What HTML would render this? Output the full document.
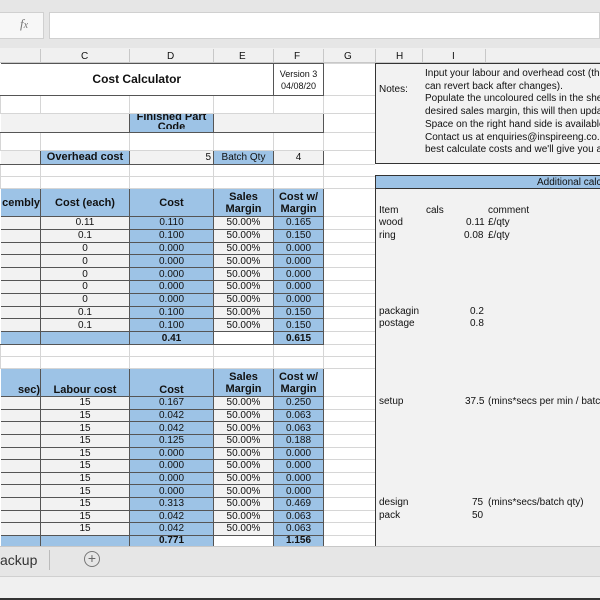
<!DOCTYPE html>
<html><head><meta charset="utf-8"><style>
*{margin:0;padding:0;box-sizing:border-box}
body{width:600px;height:600px;overflow:hidden;background:#fff;font-family:"Liberation Sans",Arial,sans-serif;font-size:10px;color:#111;position:relative}
.a{position:absolute}
table{position:absolute;left:0;top:63px;border-collapse:collapse;table-layout:fixed}
td{border:1px solid #d6d6d6;padding:0 2px;white-space:nowrap;overflow:hidden;text-align:center;font-size:10px;line-height:9px}
td.g{background:#f2f2f2;border-color:#555}
td.u{background:#9dc3e6;border-color:#555}
td.w{border-color:#555}
td.h{font-weight:bold;font-size:11px;line-height:12px}
td.r{text-align:right}
.rt{position:absolute;font-size:10px;white-space:nowrap}
</style></head><body>
<div class="a" style="left:0;top:0;width:600px;height:48px;background:#e6e6e6"></div>
<div class="a" style="left:0;top:12px;width:44px;height:27px;background:#f7f7f7;border:1px solid #d0d0d0;border-left:none"></div>
<div class="a" style="left:20px;top:16px;font-family:'Liberation Serif',serif;font-style:italic;font-size:13px;color:#777">f<span style="font-size:10px">x</span></div>
<div class="a" style="left:49px;top:12px;width:551px;height:27px;background:#fff;border:1px solid #d0d0d0"></div>
<div class="a" style="left:0;top:48px;width:600px;height:15px;background:#f0f0f0;border-bottom:1px solid #c8c8c8"></div>
<div class="a" style="left:40px;top:49px;width:1px;height:14px;background:#c8c8c8"></div>
<div class="a" style="left:129px;top:49px;width:1px;height:14px;background:#c8c8c8"></div>
<div class="a" style="left:213px;top:49px;width:1px;height:14px;background:#c8c8c8"></div>
<div class="a" style="left:273px;top:49px;width:1px;height:14px;background:#c8c8c8"></div>
<div class="a" style="left:323px;top:49px;width:1px;height:14px;background:#c8c8c8"></div>
<div class="a" style="left:375px;top:49px;width:1px;height:14px;background:#c8c8c8"></div>
<div class="a" style="left:422px;top:49px;width:1px;height:14px;background:#c8c8c8"></div>
<div class="a" style="left:485px;top:49px;width:1px;height:14px;background:#c8c8c8"></div>
<div class="rt" style="left:81px;top:51px">C</div>
<div class="rt" style="left:167px;top:51px">D</div>
<div class="rt" style="left:239px;top:51px">E</div>
<div class="rt" style="left:294px;top:51px">F</div>
<div class="rt" style="left:344px;top:51px">G</div>
<div class="rt" style="left:396px;top:51px">H</div>
<div class="rt" style="left:452px;top:51px">I</div>

<table>
<colgroup><col style="width:40px"><col style="width:89px"><col style="width:84px"><col style="width:60px"><col style="width:50px"><col style="width:52px"></colgroup>
<tr style="height:32px"><td class="w" colspan="4" style="font-weight:bold;font-size:12px;border-color:#555;border-left:none">Cost Calculator</td><td class="w" style="font-size:9px;line-height:12px;padding:0">Version 3<br>04/08/20</td><td></td></tr>
<tr style="height:18px"><td></td><td></td><td></td><td></td><td></td><td></td></tr>
<tr style="height:19px"><td class="g" colspan="2" style="border-left:none"></td><td class="u h" style="line-height:10px;vertical-align:top;height:19px"><div style="height:17px;overflow:hidden;margin-top:-2px">Finished Part<br>Code</div></td><td class="g" colspan="2"></td><td></td></tr>
<tr style="height:18px"><td></td><td></td><td></td><td></td><td></td><td></td></tr>
<tr style="height:14px"><td class="g" style="border-left:none"></td><td class="u h" style="line-height:11px">Overhead cost</td><td class="g r">5</td><td class="u">Batch Qty</td><td class="g">4</td><td></td></tr>
<tr style="height:12px"><td></td><td></td><td></td><td></td><td></td><td></td></tr>
<tr style="height:12px"><td></td><td></td><td></td><td></td><td></td><td></td></tr>
<tr style="height:28px"><td class="u h r" style="border-left:none;padding:0">cembly</td><td class="u h">Cost (each)</td><td class="u h">Cost</td><td class="u h">Sales<br>Margin</td><td class="u h">Cost w/<br>Margin</td><td></td></tr>
<tr style="height:12.8px"><td class="g" style="border-left:none"></td><td class="g">0.11</td><td class="u">0.110</td><td class="g">50.00%</td><td class="u">0.165</td><td></td></tr>
<tr style="height:12.8px"><td class="g" style="border-left:none"></td><td class="g">0.1</td><td class="u">0.100</td><td class="g">50.00%</td><td class="u">0.150</td><td></td></tr>
<tr style="height:12.8px"><td class="g" style="border-left:none"></td><td class="g">0</td><td class="u">0.000</td><td class="g">50.00%</td><td class="u">0.000</td><td></td></tr>
<tr style="height:12.8px"><td class="g" style="border-left:none"></td><td class="g">0</td><td class="u">0.000</td><td class="g">50.00%</td><td class="u">0.000</td><td></td></tr>
<tr style="height:12.8px"><td class="g" style="border-left:none"></td><td class="g">0</td><td class="u">0.000</td><td class="g">50.00%</td><td class="u">0.000</td><td></td></tr>
<tr style="height:12.8px"><td class="g" style="border-left:none"></td><td class="g">0</td><td class="u">0.000</td><td class="g">50.00%</td><td class="u">0.000</td><td></td></tr>
<tr style="height:12.8px"><td class="g" style="border-left:none"></td><td class="g">0</td><td class="u">0.000</td><td class="g">50.00%</td><td class="u">0.000</td><td></td></tr>
<tr style="height:12.8px"><td class="g" style="border-left:none"></td><td class="g">0.1</td><td class="u">0.100</td><td class="g">50.00%</td><td class="u">0.150</td><td></td></tr>
<tr style="height:12.8px"><td class="g" style="border-left:none"></td><td class="g">0.1</td><td class="u">0.100</td><td class="g">50.00%</td><td class="u">0.150</td><td></td></tr>
<tr style="height:13px"><td class="u" style="border-left:none"></td><td class="u"></td><td class="u" style="font-weight:bold">0.41</td><td class="w"></td><td class="u" style="font-weight:bold">0.615</td><td></td></tr>
<tr style="height:12px"><td></td><td></td><td></td><td></td><td></td><td></td></tr>
<tr style="height:12px"><td></td><td></td><td></td><td></td><td></td><td></td></tr>
<tr style="height:28px"><td class="u h r" style="border-left:none;padding:0;vertical-align:bottom">sec)</td><td class="u h" style="vertical-align:bottom">Labour cost</td><td class="u h" style="vertical-align:bottom">Cost</td><td class="u h">Sales<br>Margin</td><td class="u h">Cost w/<br>Margin</td><td></td></tr>
<tr style="height:12.6px"><td class="g" style="border-left:none"></td><td class="g">15</td><td class="u">0.167</td><td class="g">50.00%</td><td class="u">0.250</td><td></td></tr>
<tr style="height:12.6px"><td class="g" style="border-left:none"></td><td class="g">15</td><td class="u">0.042</td><td class="g">50.00%</td><td class="u">0.063</td><td></td></tr>
<tr style="height:12.6px"><td class="g" style="border-left:none"></td><td class="g">15</td><td class="u">0.042</td><td class="g">50.00%</td><td class="u">0.063</td><td></td></tr>
<tr style="height:12.6px"><td class="g" style="border-left:none"></td><td class="g">15</td><td class="u">0.125</td><td class="g">50.00%</td><td class="u">0.188</td><td></td></tr>
<tr style="height:12.6px"><td class="g" style="border-left:none"></td><td class="g">15</td><td class="u">0.000</td><td class="g">50.00%</td><td class="u">0.000</td><td></td></tr>
<tr style="height:12.6px"><td class="g" style="border-left:none"></td><td class="g">15</td><td class="u">0.000</td><td class="g">50.00%</td><td class="u">0.000</td><td></td></tr>
<tr style="height:12.6px"><td class="g" style="border-left:none"></td><td class="g">15</td><td class="u">0.000</td><td class="g">50.00%</td><td class="u">0.000</td><td></td></tr>
<tr style="height:12.6px"><td class="g" style="border-left:none"></td><td class="g">15</td><td class="u">0.000</td><td class="g">50.00%</td><td class="u">0.000</td><td></td></tr>
<tr style="height:12.6px"><td class="g" style="border-left:none"></td><td class="g">15</td><td class="u">0.313</td><td class="g">50.00%</td><td class="u">0.469</td><td></td></tr>
<tr style="height:12.6px"><td class="g" style="border-left:none"></td><td class="g">15</td><td class="u">0.042</td><td class="g">50.00%</td><td class="u">0.063</td><td></td></tr>
<tr style="height:12.6px"><td class="g" style="border-left:none"></td><td class="g">15</td><td class="u">0.042</td><td class="g">50.00%</td><td class="u">0.063</td><td></td></tr>
<tr style="height:11px"><td class="u" style="border-left:none"></td><td class="u"></td><td class="u" style="font-weight:bold">0.771</td><td class="w"></td><td class="u" style="font-weight:bold">1.156</td><td></td></tr>
</table>

<div class="a" style="left:375px;top:63px;width:230px;height:101px;background:#f2f2f2;border:1px solid #333;border-right:none"></div>
<div class="rt" style="left:379px;top:84px">Notes:</div>
<div class="a" style="left:425px;top:68px;font-size:10px;line-height:12.7px;white-space:nowrap">Input your labour and overhead cost (the<br>can revert back after changes).<br>Populate the uncoloured cells in the shee<br>desired sales margin, this will then update<br>Space on the right hand side is available f<br>Contact us at enquiries@inspireeng.co.uk<br>best calculate costs and we'll give you all</div>
<div class="a" style="left:375px;top:164px;width:225px;height:12px;background:#fff"></div>
<div class="a" style="left:375px;top:175px;width:230px;height:372px;background:#f2f2f2;border:1px solid #333;border-right:none"></div>
<div class="a" style="left:376px;top:176px;width:224px;height:13px;background:#9dc3e6;border-bottom:1px solid #333"></div>
<div class="rt" style="left:537px;top:177px">Additional calc</div>
<div class="rt" style="left:379px;top:205px">Item</div><div class="rt" style="left:426px;top:205px">cals</div><div class="rt" style="left:488px;top:205px">comment</div>
<div class="rt" style="left:379px;top:217px">wood</div><div class="rt" style="left:466px;top:217px">0.11</div><div class="rt" style="left:488px;top:217px">£/qty</div>
<div class="rt" style="left:379px;top:230px">ring</div><div class="rt" style="left:464px;top:230px">0.08</div><div class="rt" style="left:488px;top:230px">£/qty</div>
<div class="rt" style="left:379px;top:306px">packagin</div><div class="rt" style="left:470px;top:306px">0.2</div>
<div class="rt" style="left:379px;top:318px">postage</div><div class="rt" style="left:470px;top:318px">0.8</div>
<div class="rt" style="left:379px;top:396px">setup</div><div class="rt" style="left:465px;top:396px">37.5</div><div class="rt" style="left:488px;top:396px">(mins*secs per min / batch</div>
<div class="rt" style="left:379px;top:497px">design</div><div class="rt" style="left:472px;top:497px">75</div><div class="rt" style="left:488px;top:497px">(mins*secs/batch qty)</div>
<div class="rt" style="left:379px;top:510px">pack</div><div class="rt" style="left:472px;top:510px">50</div>

<div class="a" style="left:0;top:546px;width:600px;height:30px;background:#e6e6e6;border-top:1px solid #c8c8c8"></div>
<div class="rt" style="left:0;top:552px;font-size:14px;color:#333">ackup</div>
<div class="a" style="left:49px;top:550px;width:1px;height:20px;background:#bbb"></div>
<div class="a" style="left:84px;top:551px;width:16px;height:16px;border:1px solid #777;border-radius:50%;text-align:center;line-height:13px;font-size:14px;color:#666">+</div>
<div class="a" style="left:0;top:576px;width:600px;height:22px;background:#f0f0f0;border-top:1px solid #d0d0d0"></div>
<div class="a" style="left:0;top:598px;width:600px;height:2px;background:#333"></div>
</body></html>
